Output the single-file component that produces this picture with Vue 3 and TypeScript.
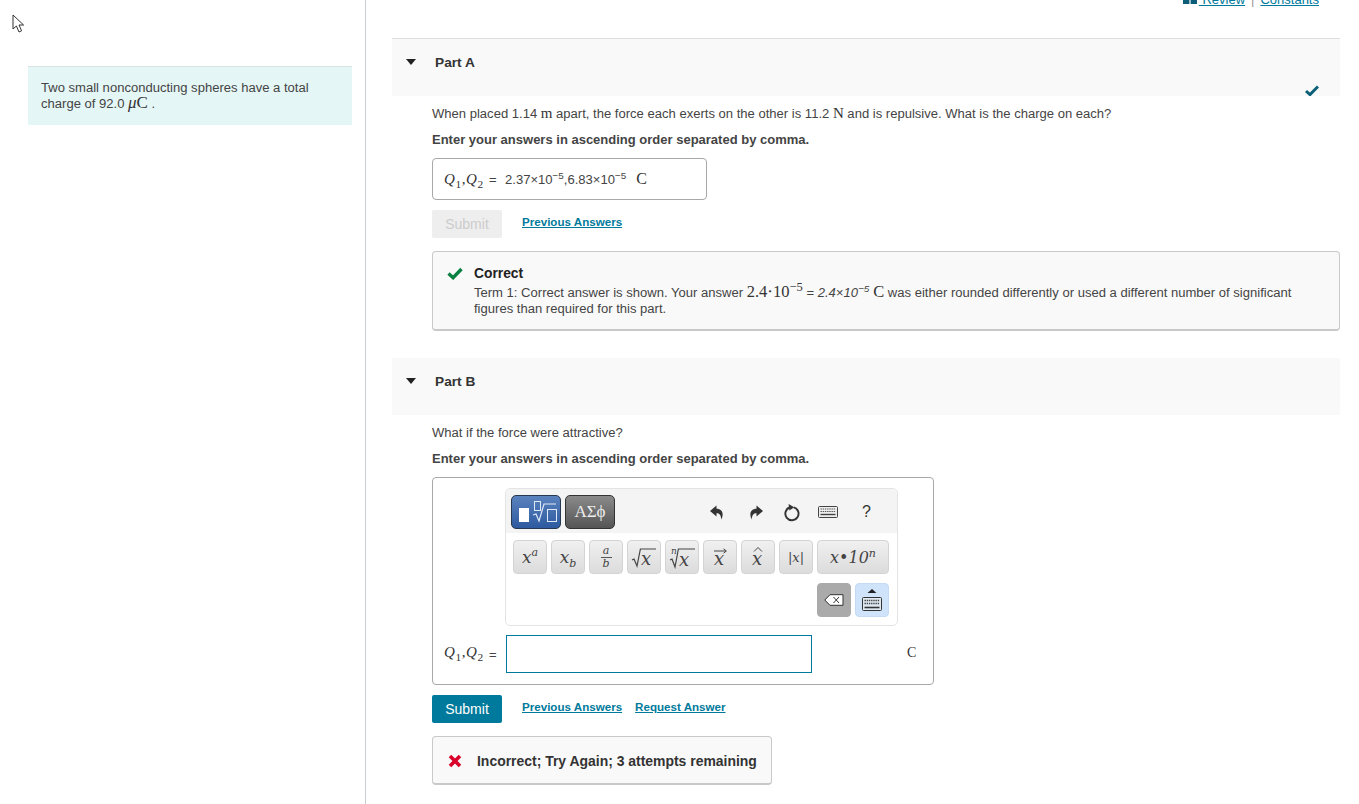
<script setup lang="ts">
const attempts = 3;
</script>

<template>
  <div class="page">
    <svg class="cursor" width="14" height="20" viewBox="0 0 14 20">
      <path d="M1 1v14l3.4-3 2.600 6 2.600-1.200-2.600-5.800h4.600z" fill="#fff" stroke="#333" stroke-width="1" />
    </svg>

    <aside class="left">
      <div class="intro">
        Two small nonconducting spheres have a total charge of 92.0
        <span class="math big"><i>μ</i>C</span> .
      </div>
    </aside>

    <main class="right">
      <div class="top-links">
        <svg class="book" width="14" height="7" viewBox="0 0 14 7">
          <path d="M0 0h6.400v4H0zM7.600 0H14v4H7.600z" fill="#0c5d77" />
        </svg>
        <a>&nbsp;Review</a>
        <span class="pipe">|</span>
        <a>Constants</a>
      </div>

      <section class="part">
        <header class="part-head first">
          <span class="tri"></span>
          <b>Part A</b>
          <svg class="done" width="14" height="11" viewBox="0 0 14 11">
            <path d="M1 6l4 3.600L13 1.500" fill="none" stroke="#0c6178" stroke-width="3" />
          </svg>
        </header>
        <div class="part-body">
          <p class="q q-a">
            When placed 1.14 <span class="math">m</span> apart, the force each exerts on the other is 11.2
            <span class="math">N</span> and is repulsive. What is the charge on each?
          </p>
          <p class="ins">Enter your answers in ascending order separated by comma.</p>
          <div class="answer-box">
            <span class="math qs"><i>Q</i><sub>1</sub>,<i>Q</i><sub>2</sub></span>
            <span class="eq">=</span>
            <span class="val">2.37×10<sup>−5</sup>,6.83×10<sup>−5</sup></span>
            <span class="math unit">C</span>
          </div>
          <div class="actions">
            <button class="submit off">Submit</button>
            <a>Previous Answers</a>
          </div>
          <div class="feedback ok">
            <svg class="fb-icon" width="16" height="13" viewBox="0 0 16 13">
              <path d="M1.500 6.500l4.600 4.200L14.500 2" fill="none" stroke="#0b8043" stroke-width="3.400" />
            </svg>
            <div>
              <b class="fb-title">Correct</b>
              <div class="fb-text">
                Term 1: Correct answer is shown. Your answer
                <span class="math fb-math">2.4⋅10<sup>−5</sup></span> = <i>2.4×10<sup>−5</sup></i>
                <span class="math fb-math unit-c">C</span> was either rounded differently or used a different number of
                significant figures than required for this part.
              </div>
            </div>
          </div>
        </div>
      </section>

      <section class="part">
        <header class="part-head second">
          <span class="tri"></span>
          <b>Part B</b>
        </header>
        <div class="part-body">
          <p class="q q-b">What if the force were attractive?</p>
          <p class="ins">Enter your answers in ascending order separated by comma.</p>
          <div class="editor">
            <div class="toolbar">
              <div class="tool-top">
                <button class="tab tab-blue">
                  <svg width="48" height="32" viewBox="1 1 48 32">
                    <rect x="8" y="13" width="10" height="14" fill="#fff" />
                    <rect x="23.500" y="6.500" width="6" height="9" fill="none" stroke="#dfe9f7" />
                    <path d="M22 20l3-1 3 7 5-17h12" fill="none" stroke="#dfe9f7" stroke-width="1.200" />
                    <rect x="36.500" y="14.500" width="9" height="12" fill="none" stroke="#dfe9f7" />
                  </svg>
                </button>
                <button class="tab tab-gray">ΑΣϕ</button>
                <div class="tool-icons">
                  <svg class="ic-undo" width="16" height="17" viewBox="0 0 16 17">
                    <path d="M7.500 1.500L1 7l6.500 5.500V9.200c3 0 4.500 1.800 4.800 6.300C15 10 13.800 5 7.500 4.800z" fill="#333" />
                  </svg>
                  <svg class="ic-redo" width="16" height="17" viewBox="0 0 16 17">
                    <path d="M8.500 1.500L15 7l-6.500 5.500V9.200c-3 0-4.500 1.800-4.800 6.300C1 10 2.200 5 8.500 4.800z" fill="#333" />
                  </svg>
                  <svg class="ic-reset" width="18" height="19" viewBox="0 0 18 19">
                    <path d="M10.800 4.300a6.600 6.600 0 1 1-4.300.2" fill="none" stroke="#333" stroke-width="1.900" />
                    <path d="M5.600 1l5.600 3.200-4.800 3.400z" fill="#333" />
                  </svg>
                  <svg class="ic-keys" width="20" height="12" viewBox="0 0 20 12">
                    <rect x=".5" y=".5" width="19" height="11" rx="1" fill="#eee" stroke="#444" />
                    <path d="M2.500 3h15M2.500 5.500h15" stroke="#555" stroke-width="1.200" stroke-dasharray="1.400 .8" />
                    <path d="M2.500 8.500h15" stroke="#444" stroke-width="1.400" />
                  </svg>
                  <span class="help">?</span>
                </div>
              </div>
              <div class="tool-row">
                <button class="mb"><span class="mx"><i>x<sup>a</sup></i></span></button>
                <button class="mb"><span class="mx"><i>x<sub>b</sub></i></span></button>
                <button class="mb">
                  <span class="frac"><i>a</i><i class="den">b</i></span>
                </button>
                <button class="mb">
                  <svg width="26" height="22" viewBox="0 0 26 22">
                    <path d="M1 14l2-1 3 7 3.400-17H25" fill="none" stroke="#444" stroke-width="1.200" />
                    <text x="10" y="19" class="svg-x">x</text>
                  </svg>
                </button>
                <button class="mb">
                  <svg width="28" height="24" viewBox="0 0 28 24">
                    <text x="3" y="9" class="svg-n">n</text>
                    <path d="M2 15l2-1 3 8 3.400-18H27" fill="none" stroke="#444" stroke-width="1.200" />
                    <text x="11" y="21" class="svg-x">x</text>
                  </svg>
                </button>
                <button class="mb">
                  <svg width="18" height="24" viewBox="0 0 18 24">
                    <path d="M3 6h12M12.500 3.800L15.400 6l-2.900 2.200" fill="none" stroke="#444" />
                    <text x="3" y="20" class="svg-x">x</text>
                  </svg>
                </button>
                <button class="mb">
                  <svg width="18" height="24" viewBox="0 0 18 24">
                    <path d="M5 6.500l4-4 4 4" fill="none" stroke="#444" />
                    <text x="3" y="20" class="svg-x">x</text>
                  </svg>
                </button>
                <button class="mb"><span class="abs">|<i>x</i>|</span></button>
                <button class="mb wide"><span class="mx sci"><i>x•10<sup>n</sup></i></span></button>
              </div>
              <div class="tool-row end">
                <button class="mb del">
                  <svg width="20" height="12" viewBox="0 0 20 12">
                    <path d="M6 .7h13v10.600H6L.8 6z" fill="#fff" stroke="#333" />
                    <path d="M9.500 3l5.500 6M15 3l-5.500 6" stroke="#333" />
                  </svg>
                </button>
                <button class="mb kb">
                  <svg width="20" height="24" viewBox="0 0 20 24">
                    <path d="M10 1l4.500 4h-9z" fill="#222" />
                    <rect x=".5" y="9.500" width="19" height="13" rx="1" fill="#dfe9f2" stroke="#333" />
                    <path d="M2.500 12.500h15M2.500 15.500h15" stroke="#444" stroke-width="1.400" stroke-dasharray="1.400 .8" />
                    <path d="M2.500 19.500h15" stroke="#333" stroke-width="1.600" />
                  </svg>
                </button>
              </div>
            </div>
            <div class="input-row">
              <span class="math qs"><i>Q</i><sub>1</sub>,<i>Q</i><sub>2</sub></span>
              <span class="eq">=</span>
              <input class="field" type="text" />
              <span class="math unit-b">C</span>
            </div>
          </div>
          <div class="actions second-actions">
            <button class="submit">Submit</button>
            <a>Previous Answers</a>
            <a class="req">Request Answer</a>
          </div>
          <div class="feedback bad">
            <svg class="x-icon" width="14" height="14" viewBox="0 0 14 14">
              <path d="M2 2l10 10M12 2L2 12" stroke="#d9042b" stroke-width="3.600" />
            </svg>
            <b>Incorrect; Try Again; {{ attempts }} attempts remaining</b>
          </div>
        </div>
      </section>
    </main>
  </div>
</template>

<style>
html,
body {
  margin: 0;
  background: #fff;
}
</style>

<style scoped>
.page {
  position: relative;
  display: flex;
  width: 1359px;
  height: 804px;
  overflow: hidden;
  font-family: "Liberation Sans", Arial, sans-serif;
  font-size: 13.05px;
  color: #444;
  background: #fff;
}

p {
  margin: 0;
}

a {
  color: #007a9c;
  text-decoration: underline;
  font-weight: bold;
  font-size: 11.600px;
}

.cursor {
  position: absolute;
  left: 12px;
  top: 14px;
}

.left {
  box-sizing: border-box;
  width: 366px;
  height: 804px;
  padding: 66px 13px 0 28px;
  border-right: 1px solid #c7ced3;
  flex: none;
}

.intro {
  box-sizing: border-box;
  height: 59px;
  padding: 13px 30px 0 13px;
  background: #e5f6f6;
  border-top: 1px solid #d9e1e3;
  line-height: 16px;
}

.math {
  font-family: "Liberation Serif", "DejaVu Serif", serif;
  font-size: 15px;
  line-height: 0;
  color: #333;
}

.math.big {
  font-size: 17px;
}

.math.fb-math {
  font-size: 16.500px;
}

.unit-c {
  margin-left: 4px;
}

.math sub,
.math sup,
.val sup,
.fb-text sup {
  font-size: 76%;
  line-height: 0;
}

.right {
  width: 948px;
  margin-left: 26px;
  flex: none;
}

.top-links {
  display: flex;
  align-items: flex-end;
  justify-content: flex-end;
  gap: 6px;
  height: 7px;
  padding-right: 21px;
  margin-bottom: 31px;
  overflow: hidden;
  line-height: 14px;
}

.top-links a {
  font-weight: normal;
  font-size: 13px;
}

.book {
  align-self: flex-start;
  margin-right: -4px;
}

.pipe {
  color: #999;
  font-size: 13px;
}

.part-head {
  position: relative;
  display: flex;
  align-items: flex-start;
  box-sizing: border-box;
  padding: 16px 0 0 14px;
  background: #f9f9f9;
  color: #333;
  font-size: 13.700px;
  line-height: 16px;
}

.part-head.first {
  height: 58px;
  border-top: 1px solid #dedede;
}

.part-head.second {
  height: 57px;
  margin-top: 27px;
}

.tri {
  width: 0;
  height: 0;
  margin: 4px 19px 0 0;
  border-left: 5.500px solid transparent;
  border-right: 5.500px solid transparent;
  border-top: 6px solid #222;
}

.done {
  position: absolute;
  right: 21px;
  bottom: 0;
}

.part-body {
  padding-left: 40px;
}

.q {
  line-height: 17px;
}

.q-a {
  margin-top: 9px;
}

.q-b {
  margin-top: 9px;
}

.ins {
  margin-top: 9px;
  font-weight: bold;
  font-size: 13px;
  line-height: 17px;
}

.answer-box {
  display: flex;
  align-items: center;
  box-sizing: border-box;
  width: 275px;
  height: 42px;
  margin-top: 10px;
  padding-left: 11px;
  border: 1px solid #a8a8a8;
  border-radius: 4px;
  white-space: nowrap;
}

.qs {
  font-size: 15px;
  line-height: 16px;
  width: 40px;
  flex: none;
  white-space: nowrap;
  letter-spacing: 0.6px;
}

.eq {
  margin-left: 5px;
  width: 9px;
  flex: none;
}

.val {
  margin-left: 7px;
}

.unit {
  margin-left: 10px;
  font-size: 16px;
  line-height: 16px;
}

.actions {
  display: flex;
  align-items: center;
  gap: 20px;
  height: 28px;
  margin-top: 10px;
}

.submit {
  box-sizing: border-box;
  width: 70px;
  height: 28px;
  padding: 0;
  border: 0;
  border-radius: 2px;
  background: #007a9c;
  color: #fff;
  font: 14px "Liberation Sans", Arial, sans-serif;
}

.submit.off {
  background: #eee;
  color: #ccc;
}

.actions a {
  position: relative;
  top: -3px;
}

.actions .req {
  margin-left: -7px;
}

.feedback {
  box-sizing: border-box;
  background: #f9f9f9;
  border: 1px solid #c9c9c9;
  border-bottom-width: 2px;
  border-radius: 4px;
}

.feedback.ok {
  display: flex;
  width: 908px;
  height: 80px;
  margin-top: 13px;
  padding: 14px 40px 0 14px;
}

.fb-icon {
  flex: none;
  margin: 1px 11px 0 0;
}

.fb-title {
  display: block;
  color: #222;
  font-size: 13.800px;
  line-height: 16px;
}

.fb-text {
  line-height: 16px;
  margin-top: 3px;
}

.editor {
  box-sizing: border-box;
  width: 502px;
  height: 208px;
  margin-top: 10px;
  padding: 10px 0 0 72px;
  border: 1px solid #a8a8a8;
  border-radius: 4px;
}

.toolbar {
  box-sizing: border-box;
  width: 393px;
  height: 138px;
  border: 1px solid #e4e4e4;
  border-radius: 5px;
}

.tool-top {
  display: flex;
  align-items: center;
  gap: 4px;
  height: 42px;
  padding: 2px 0 0 5px;
  background: #f4f4f4;
  border-radius: 5px 5px 0 0;
}

.tab {
  display: flex;
  align-items: center;
  justify-content: center;
  box-sizing: border-box;
  width: 50px;
  height: 34px;
  padding: 0;
  border: 1px solid #26384f;
  border-radius: 5px;
  color: #eee;
  font: 17px "Liberation Serif", serif;
}

.tab-blue {
  background: linear-gradient(#5a82bd, #2d5aa0);
}

.tab-gray {
  background: linear-gradient(#8a8a8a, #555);
  border-color: #333;
}

.tool-icons {
  display: flex;
  align-items: center;
  margin-left: 90px;
}

.ic-redo {
  margin-left: 23px;
}

.ic-reset {
  margin-left: 19px;
}

.ic-keys {
  margin-left: 17px;
}

.help {
  margin-left: 24px;
  font-size: 16px;
  color: #333;
}

.tool-row {
  display: flex;
  gap: 4px;
  padding: 7px 0 0 7px;
}

.tool-row.end {
  justify-content: flex-end;
  padding: 9px 8px 0 0;
}

.mb {
  display: flex;
  align-items: center;
  justify-content: center;
  box-sizing: border-box;
  width: 34px;
  height: 34px;
  padding: 0;
  border: 1px solid #d4d4d4;
  border-radius: 4px;
  background: linear-gradient(#f0f0f0, #dcdcdc);
  color: #444;
}

.mb.wide {
  width: 72px;
}

.mb.del {
  background: #aaa;
  border-color: #aaa;
}

.mb.kb {
  background: #cfe3fb;
  border-color: #c4daf5;
}

.mx {
  font-family: "DejaVu Serif", serif;
  font-size: 17px;
  font-weight: normal;
}

.mx sup,
.mx sub {
  font-size: 11px;
  line-height: 0;
}

.sci {
  font-size: 16px;
}

.frac {
  display: flex;
  flex-direction: column;
  align-items: center;
  width: 11px;
  font: 11px/12px "DejaVu Serif", serif;
}

.frac .den {
  width: 100%;
  text-align: center;
  border-top: 1px solid #555;
}

.abs {
  font: 13px "DejaVu Serif", serif;
}

.svg-x {
  font: italic 18px "DejaVu Serif", serif;
  fill: #444;
}

.svg-n {
  font: italic 9px "DejaVu Serif", serif;
  fill: #444;
}

.input-row {
  display: flex;
  align-items: center;
  height: 38px;
  margin: 9px 0 0 -61px;
  position: relative;
}

.input-row .qs {
  position: relative;
  top: -2px;
}

.field {
  box-sizing: border-box;
  width: 306px;
  height: 38px;
  margin-left: 8px;
  border: 1px solid #007a9c;
  outline: none;
}

.unit-b {
  margin-left: 95px;
  font-size: 14px;
  line-height: 16px;
  position: relative;
  top: -1px;
}

.second-actions {
  margin-top: 10px;
}

.feedback.bad {
  display: flex;
  align-items: center;
  width: 340px;
  height: 49px;
  margin-top: 13px;
  padding: 2px 0 0 15px;
  color: #333;
  font-size: 13.950px;
  white-space: nowrap;
}

.x-icon {
  flex: none;
  margin-right: 15px;
}
</style>
